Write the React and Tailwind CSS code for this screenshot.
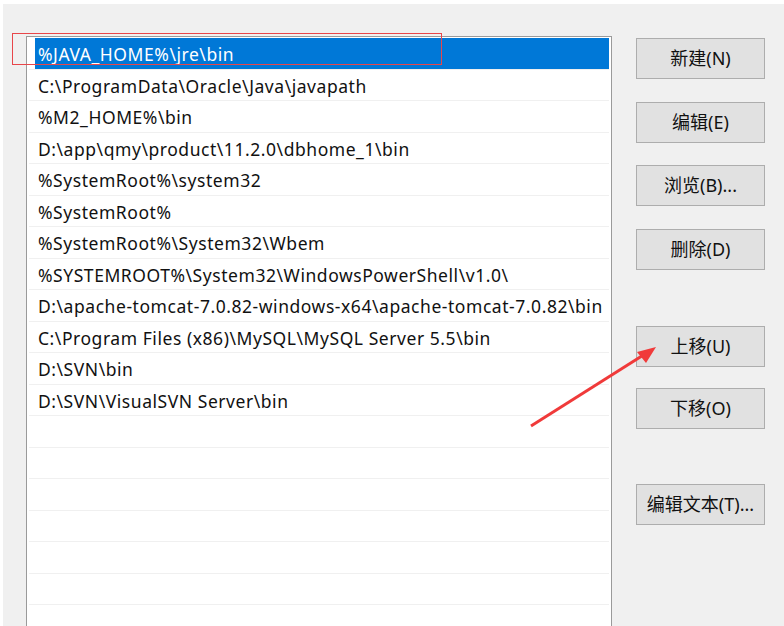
import React from "react";

const paths = [
  "%JAVA_HOME%\\jre\\bin",
  "C:\\ProgramData\\Oracle\\Java\\javapath",
  "%M2_HOME%\\bin",
  "D:\\app\\qmy\\product\\11.2.0\\dbhome_1\\bin",
  "%SystemRoot%\\system32",
  "%SystemRoot%",
  "%SystemRoot%\\System32\\Wbem",
  "%SYSTEMROOT%\\System32\\WindowsPowerShell\\v1.0\\",
  "D:\\apache-tomcat-7.0.82-windows-x64\\apache-tomcat-7.0.82\\bin",
  "C:\\Program Files (x86)\\MySQL\\MySQL Server 5.5\\bin",
  "D:\\SVN\\bin",
  "D:\\SVN\\VisualSVN Server\\bin",
  "",
  "",
  "",
  "",
  "",
  "",
  "",
];

// label + top margin to reproduce the grouped spacing
const buttons = [
  { label: "新建(N)", mt: "mt-0" },
  { label: "编辑(E)", mt: "mt-[23px]" },
  { label: "浏览(B)...", mt: "mt-[22px]" },
  { label: "删除(D)", mt: "mt-[23px]" },
  { label: "上移(U)", mt: "mt-[56px]" },
  { label: "下移(O)", mt: "mt-[21px]" },
  { label: "编辑文本(T)...", mt: "mt-[55px]" },
];

const font = { fontFamily: '"Noto Sans", "Noto Sans CJK SC", sans-serif' };

export default function App() {
  return (
    <div className="w-[784px] h-[626px] bg-white pt-[4px] pl-[3px] overflow-hidden" style={font}>
      <div className="relative h-full bg-[#f0f0f0] flex items-start pt-[32px] pl-[23px]">
        {/* Path list */}
        <div className="w-[586px] h-[620px] shrink-0 bg-white border border-[#9a9a9a] pt-[1px] px-[2px]">
          {paths.map((p, i) => (
            <div
              key={i}
              className="h-[31.5px] border-b border-[#f0f0f0] flex"
            >
              <div
                className={`ml-[6px] flex-1 text-[17.5px] tracking-[0.55px] leading-none flex items-center pl-[3px] pt-[3px] whitespace-nowrap ${
                  i === 0 ? "bg-[#0078d7] text-white" : "text-[#111]"
                }`}
              >
                {p}
              </div>
            </div>
          ))}
        </div>

        {/* Buttons */}
        <div className="flex flex-col ml-[24px] mt-[2px]">
          {buttons.map((b) => (
            <button
              key={b.label}
              className={`${b.mt} w-[129px] h-[41px] bg-[#e1e1e1] border border-[#adadad] text-[18px] text-[#111] flex items-center justify-center`}
            >
              {b.label}
            </button>
          ))}
        </div>

        {/* Red highlight box */}
        <div className="absolute left-[9px] top-[29px] w-[430px] h-[32px] border-[1.5px] border-[#e8464a] pointer-events-none" />

        {/* Red arrow */}
        <svg className="absolute left-0 top-0 pointer-events-none" width="781" height="622" viewBox="0 0 781 622">
          <g transform="translate(-3 -4)">
            <line x1="531" y1="426" x2="645" y2="354" stroke="#f03a3a" strokeWidth="3" />
            <polygon points="656,347 637,352 646,363" fill="#f03a3a" />
          </g>
        </svg>
      </div>
    </div>
  );
}
